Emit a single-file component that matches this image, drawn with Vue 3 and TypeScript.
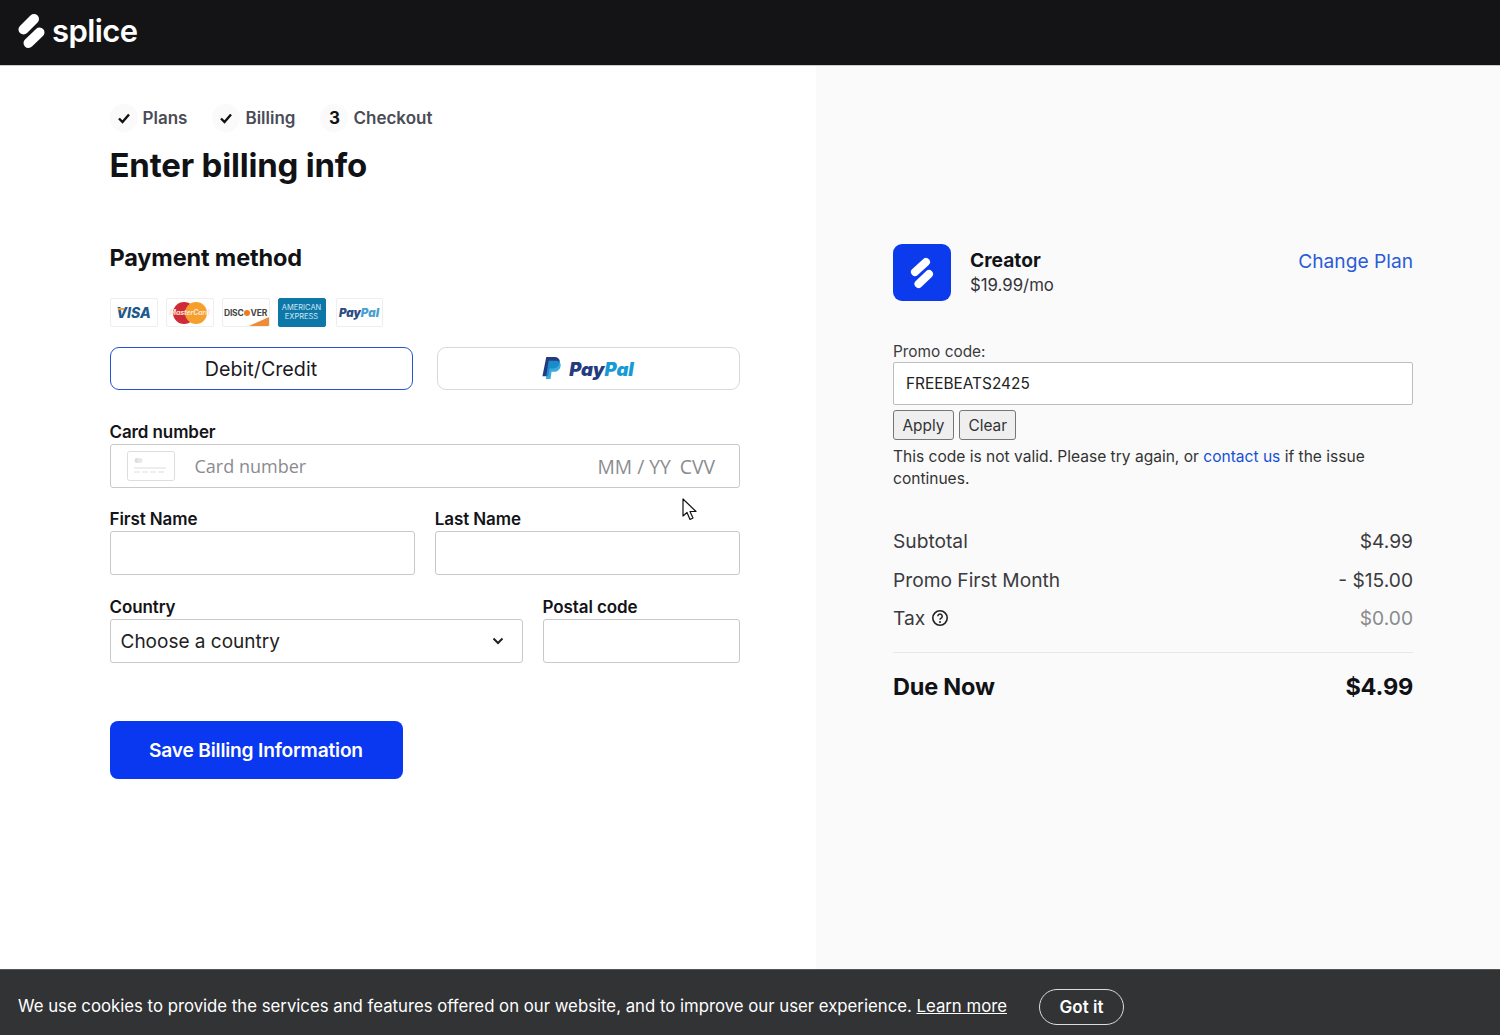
<script setup lang="ts">
interface Step { mark: string; label: string; done: boolean }
interface Row { label: string; value: string; help?: boolean; muted?: boolean }
const steps: Step[] = [
  { mark: '', label: 'Plans', done: true },
  { mark: '', label: 'Billing', done: true },
  { mark: '3', label: 'Checkout', done: false },
]
const rows: Row[] = [
  { label: 'Subtotal', value: '$4.99' },
  { label: 'Promo First Month', value: '- $15.00' },
  { label: 'Tax', value: '$0.00', help: true, muted: true },
]
</script>

<template>
  <div class="page">
    <header class="top">
      <svg class="logo" width="28" height="40" viewBox="0 0 28 40">
        <g fill="none" stroke="#fff" stroke-width="10" stroke-linecap="round">
          <path d="M16 9 L5.500 19.500" />
          <path d="M21.500 22.500 L10.500 33" />
        </g>
      </svg>
      <span class="brand">splice</span>
    </header>

    <main class="split">
      <section class="left">
        <ol class="steps">
          <li v-for="s in steps" :key="s.label" class="step">
            <span class="dot">
              <svg v-if="s.done" width="14" height="12" viewBox="0 0 14 12"><path d="M2 6.500 L5.500 10 L12 2.500" fill="none" stroke="#111" stroke-width="2.400" /></svg>
              <template v-else>{{ s.mark }}</template>
            </span>
            <span class="step-label">{{ s.label }}</span>
          </li>
        </ol>
        <h1>Enter billing info</h1>
        <h2>Payment method</h2>

        <div class="cards">
          <span class="cc visa">VISA</span>
          <span class="cc mc"><i class="red"></i><i class="orange"></i><b>MasterCard</b></span>
          <span class="cc disc">DISC<em></em>VER</span>
          <span class="cc amex">AMERICAN<br />EXPRESS</span>
          <span class="cc pp"><b>Pay</b><b class="light">Pal</b></span>
        </div>

        <div class="methods">
          <button class="method active">Debit/Credit</button>
          <button class="method">
            <svg width="20" height="23" viewBox="0 0 20 24">
              <path d="M4 0h8c4 0 6.500 2 6 5.500C17.400 10 14.500 12 10.500 12H7.500L6 20H0z" fill="#253b80" />
              <path d="M6.500 4h7c3.500 0 6 1.500 5.500 5.500-.6 4-3.500 6-7 6H9.500L8.500 23H3.500z" fill="#179bd7" opacity=".85" />
            </svg>
            <span class="pp-word"><b>Pay</b><b class="light">Pal</b></span>
          </button>
        </div>

        <label class="lbl l-card">Card number</label>
        <div class="box card-box">
          <svg class="mini" width="48" height="30" viewBox="0 0 48 30">
            <rect x=".5" y=".5" width="47" height="29" rx="2" fill="#fff" stroke="#ddd" />
            <circle cx="10" cy="9.500" r="2.500" fill="#ddd" /><circle cx="13" cy="9.500" r="2.500" fill="#e8e8e8" />
            <path d="M7 17h32" stroke="#ddd" /><path d="M7 21h32" stroke="#ddd" stroke-dasharray="6 2" />
          </svg>
          <span class="ph grow">Card number</span>
          <span class="ph lg">MM / YY</span>
          <span class="ph lg">CVV</span>
        </div>

        <div class="two names">
          <div class="field"><label class="lbl">First Name</label><div class="box"></div></div>
          <div class="field"><label class="lbl">Last Name</label><div class="box"></div></div>
        </div>

        <div class="two addr">
          <div class="field country">
            <label class="lbl">Country</label>
            <div class="box select">
              <span>Choose a country</span>
              <svg width="12" height="8" viewBox="0 0 12 8"><path d="M1.500 1.500 L6 6 L10.500 1.500" fill="none" stroke="#222" stroke-width="2" /></svg>
            </div>
          </div>
          <div class="field postal"><label class="lbl">Postal code</label><div class="box"></div></div>
        </div>

        <button class="save">Save Billing Information</button>
      </section>

      <aside class="right">
        <div class="plan">
          <div class="plan-icon">
            <svg width="28" height="38" viewBox="0 0 28 38">
              <g fill="none" stroke="#fff" stroke-width="8" stroke-linecap="round">
                <path d="M18 8 L7 18" />
                <path d="M21 20 L10.500 30" />
              </g>
            </svg>
          </div>
          <div class="plan-text">
            <div class="plan-name">Creator</div>
            <div class="plan-price">$19.99/mo</div>
          </div>
          <a class="change">Change Plan</a>
        </div>

        <div class="promo-label">Promo code:</div>
        <div class="promo-input">FREEBEATS2425</div>
        <div class="promo-btns"><button>Apply</button><button>Clear</button></div>
        <p class="err">This code is not valid. Please try again, or <a>contact us</a> if the issue continues.</p>

        <div class="rows">
          <div v-for="r in rows" :key="r.label" class="row">
            <span class="row-label">
              {{ r.label }}
              <svg v-if="r.help" width="18" height="18" viewBox="0 0 18 18">
                <circle cx="9" cy="9" r="7.200" fill="none" stroke="#222" stroke-width="1.600" />
                <path d="M6.800 7.200a2.200 2.200 0 1 1 3.400 1.900c-.8.500-1.200.9-1.200 1.700" fill="none" stroke="#222" stroke-width="1.500" />
                <circle cx="9" cy="13" r="1" fill="#222" />
              </svg>
            </span>
            <span :class="{ muted: r.muted }">{{ r.value }}</span>
          </div>
        </div>
        <div class="total"><span>Due Now</span><span>$4.99</span></div>
      </aside>
    </main>

    <footer class="cookie">
      <span>We use cookies to provide the services and features offered on our website, and to improve our user experience. <a>Learn more</a></span>
      <button class="got">Got it</button>
    </footer>

    <svg class="cursor" width="16" height="24" viewBox="0 0 16 24">
      <path d="M1 1 L1 18 L5 14.500 L8 21.500 L11 20 L8 13.500 L14 13.500 Z" fill="#fff" stroke="#111" stroke-width="1.200" stroke-linejoin="round" />
    </svg>
  </div>
</template>

<style scoped>
.page { position: relative; width: 1500px; height: 1035px; overflow: hidden; display: flex; flex-direction: column; background: #fff; color: #111216; font-family: Inter, "Liberation Sans", sans-serif; }
button { font-family: inherit; cursor: pointer; }
.top { height: 66px; flex: none; background: #141416; display: flex; align-items: center; padding: 0 0 5px 18px; box-sizing: border-box; border-bottom: 1px solid #ccc; gap: 6px; }
.logo { flex: none; }
.brand { color: #fff; font-size: 31px; font-weight: 600; letter-spacing: -.6px; }
.split { flex: 1; display: flex; min-height: 0; }
.left { width: 816px; box-sizing: border-box; padding: 38px 76px 0 109.500px; }
.right { flex: 1; background: #fafafa; box-sizing: border-box; padding: 178px 87px 0 77px; }
.steps { list-style: none; margin: 0; padding: 0; display: flex; gap: 25px; height: 28px; }
.step { display: flex; align-items: center; gap: 5px; }
.dot { width: 28px; height: 28px; border-radius: 50%; background: #fafafa; display: flex; align-items: center; justify-content: center; font-size: 17px; font-weight: 700; }
.step-label { font-size: 17px; font-weight: 600; color: #4a4c56; }
h1 { margin: 13px 0 0; font-size: 33px; line-height: 40px; font-weight: 700; letter-spacing: -.2px; }
h2 { margin: 57px 0 0; font-size: 23.500px; line-height: 32px; font-weight: 700; letter-spacing: -.15px; }
.cards { margin-top: 24px; display: flex; gap: 8px; height: 29px; }
.cc { width: 48px; height: 29px; box-sizing: border-box; border: 1px solid #eee; border-radius: 2px; background: #fff; display: flex; align-items: center; justify-content: center; position: relative; overflow: hidden; }
.visa { color: #1d5a8c; font-size: 14px; font-weight: 800; font-style: italic; }
.visa::before { content: ""; position: absolute; left: 7px; top: 9px; width: 6px; height: 2px; background: #e6a540; }
.mc .red, .mc .orange { position: absolute; width: 22px; height: 22px; border-radius: 50%; top: 2.500px; }
.mc .red { left: 6px; background: #cf2a36; }
.mc .orange { right: 6px; background: #f5a02c; }
.mc b { position: relative; color: #fde3d4; font-size: 7px; font-weight: 700; white-space: nowrap; font-style: italic; letter-spacing: -.1px; }
.disc { font-size: 8.500px; font-weight: 700; color: #444; letter-spacing: -.2px; }
.disc em { width: 6px; height: 6px; border-radius: 50%; background: #ef7a22; margin: 0 .5px; }
.disc::after { content: ""; position: absolute; right: 0; bottom: 0; border-style: solid; border-width: 0 0 9px 20px; border-color: transparent transparent #ef8a35 transparent; }
.amex { background: #0d77a8; border-color: #0d77a8; color: #cfe8f4; font-size: 7.500px; line-height: 9px; font-weight: 400; text-align: center; display: block; padding-top: 4px; }
.pp { margin-left: 2px; width: 47px; font-size: 11.500px; font-style: italic; font-weight: 800; color: #2c4a86; }
.pp .light { color: #4a9fcf; }
.methods { margin-top: 20px; display: flex; gap: 24px; }
.method { width: 303px; height: 43px; background: #fff; border: 1px solid #d9d9dc; border-radius: 9px; font-size: 19.700px; color: #1a1a1f; display: flex; align-items: center; justify-content: center; gap: 7px; padding: 0; }
.method.active { border: 1.500px solid #2553d0; }
.pp-word { font-size: 18.500px; font-style: italic; font-weight: 800; color: #253b80; }
.pp-word .light { color: #179bd7; }
.lbl { display: block; font-size: 17px; line-height: 20px; font-weight: 600; color: #141418; letter-spacing: -.1px; }
.l-card { margin-top: 32px; }
.box { height: 44px; box-sizing: border-box; border: 1px solid #c9c9cc; border-radius: 3px; background: #fff; margin-top: 2px; }
.card-box { display: flex; align-items: center; gap: 9px; padding: 0 24px 0 16px; }
.mini { margin-right: 11px; flex: none; }
.ph { font-size: 18px; color: #8b8b8f; font-family: "Open Sans", Inter, sans-serif; }
.ph.lg { font-size: 19.300px; }
.grow { flex: 1; }
.two { display: flex; gap: 20px; }
.names { margin-top: 21px; }
.addr { margin-top: 22px; }
.field { flex: 1; }
.country { flex: none; width: 413px; }
.postal { flex: none; width: 197.500px; }
.select { display: flex; align-items: center; justify-content: space-between; padding: 0 18px 0 10px; font-size: 19px; color: #222; }
.save { display: block; margin-top: 58px; width: 293px; height: 58px; border: 0; border-radius: 8px; background: #0a37f0; color: #fff; font-size: 19.200px; font-weight: 600; letter-spacing: -.2px; }
.plan { display: flex; align-items: flex-start; height: 58px; }
.plan-icon { width: 58px; height: 57px; border-radius: 9px; background: #0c3bee; display: flex; align-items: center; justify-content: center; flex: none; }
.plan-text { margin-left: 19px; flex: 1; padding-top: 3px; }
.plan-name { font-size: 19.200px; line-height: 26px; font-weight: 700; }
.plan-price { font-size: 16.800px; line-height: 24px; color: #33343a; }
.change { color: #2b5bd7; font-size: 19.200px; line-height: 34px; }
.promo-label { margin-top: 40px; font-size: 15.400px; line-height: 20px; color: #3a3a3e; }
.promo-input { height: 43px; box-sizing: border-box; border: 1px solid #bdbdc0; border-radius: 2px; background: #fff; padding: 0 12px; display: flex; align-items: center; font-size: 15.400px; color: #222; }
.promo-btns { margin-top: 5px; display: flex; gap: 5px; }
.promo-btns button { height: 30px; padding: 0 8.500px; background: #efefef; border: 1px solid #767676; border-radius: 3px; font-size: 15.400px; color: #333; }
.err { margin: 6px 0 0; font-size: 15.550px; line-height: 22px; color: #333; }
.err a { color: #1550d8; }
.rows { margin-top: 32px; }
.row { display: flex; justify-content: space-between; align-items: center; height: 38.500px; font-size: 19.200px; color: #3a3b40; }
.row-label { display: flex; align-items: center; gap: 6px; }
.muted { color: #8a8a8e; }
.total { margin-top: 14px; border-top: 1px solid #e8e8e8; padding-top: 17px; display: flex; justify-content: space-between; font-size: 23.500px; line-height: 34px; font-weight: 700; letter-spacing: -.2px; }
.cookie { height: 66px; flex: none; background: #323335; color: #fff; display: flex; align-items: center; padding: 6px 0 0 18px; gap: 32px; font-size: 16.750px; box-sizing: border-box; border-top: 1px solid #555; }
.cookie a { text-decoration: underline; }
.got { width: 85px; height: 36px; border: 1.500px solid #ddd; border-radius: 18px; background: transparent; color: #fff; font-size: 17px; font-weight: 600; padding: 0; margin-top: 2px; }
.cursor { position: absolute; left: 682px; top: 498px; }
</style>
